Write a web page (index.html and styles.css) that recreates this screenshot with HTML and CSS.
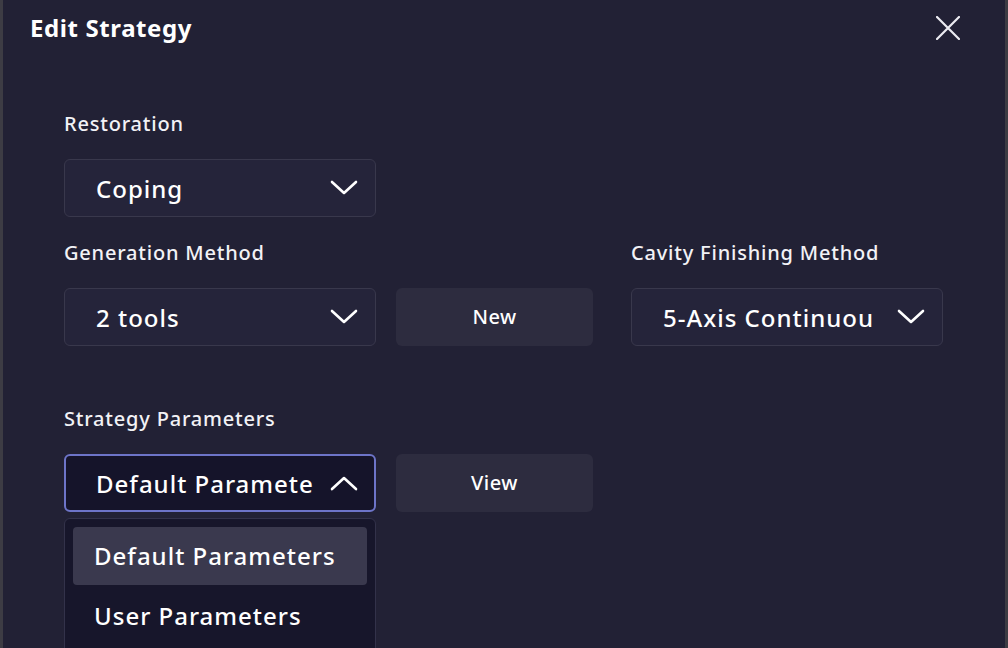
FILE: index.html
```
<!DOCTYPE html>
<html>
    <head>
        <title>Edit Strategy</title>
        <meta charset="utf-8"/>
        <link rel="stylesheet" href="styles.css">
    </head>
    <body>
        <div class="dialog">
            <div class="header">
                <h1 class="title">Edit Strategy</h1>
                <span class="close">
                    <svg width="24" height="24" viewBox="0 0 24 24"><path d="M1 1L23 23M23 1L1 23" stroke="#ececf2" stroke-width="2.2" stroke-linecap="round" fill="none"/></svg>
                </span>
            </div>
            <div class="body">
                <div class="row">
                    <div class="field">
                        <div class="label">Restoration</div>
                        <div class="select">
                            <span class="value">Coping</span>
                            <svg class="arrow" width="28" height="16" viewBox="0 0 28 16"><path d="M2 2L14 13L26 2" stroke="#fff" stroke-width="2.6" fill="none" stroke-linecap="round" stroke-linejoin="round"/></svg>
                        </div>
                    </div>
                </div>
                <div class="row row-2">
                    <div class="field">
                        <div class="label">Generation Method</div>
                        <div class="select">
                            <span class="value">2 tools</span>
                            <svg class="arrow" width="28" height="16" viewBox="0 0 28 16"><path d="M2 2L14 13L26 2" stroke="#fff" stroke-width="2.6" fill="none" stroke-linecap="round" stroke-linejoin="round"/></svg>
                        </div>
                    </div>
                    <div class="btn">New</div>
                    <div class="field field-far">
                        <div class="label">Cavity Finishing Method</div>
                        <div class="select">
                            <span class="value">5-Axis Continuou</span>
                            <svg class="arrow" width="28" height="16" viewBox="0 0 28 16"><path d="M2 2L14 13L26 2" stroke="#fff" stroke-width="2.6" fill="none" stroke-linecap="round" stroke-linejoin="round"/></svg>
                        </div>
                    </div>
                </div>
                <div class="row row-3">
                    <div class="field">
                        <div class="label">Strategy Parameters</div>
                        <div class="select open">
                            <span class="value">Default Paramete</span>
                            <svg class="arrow" width="28" height="16" viewBox="0 0 28 16"><path d="M2 14L14 3L26 14" stroke="#fff" stroke-width="2.6" fill="none" stroke-linecap="round" stroke-linejoin="round"/></svg>
                            <ul class="menu">
                                <li class="active">Default Parameters</li>
                                <li>User Parameters</li>
                            </ul>
                        </div>
                    </div>
                    <div class="btn">View</div>
                </div>
            </div>
        </div>
    </body>
</html>
```
FILE: styles.css
```
*{
    margin: 0;
    padding: 0;
    box-sizing: border-box;
}
ul,li{
    list-style-type: none;
}
body{
    background-color: #222135;
    font-family: "Noto Sans", "Open Sans", sans-serif;
    color: #fff;
    overflow: hidden;
}
.dialog{
    width: 1008px;
    height: 648px;
    background-color: #222135;
    border-left: 3px solid #3d3c44;
    border-right: 3px solid #3d3c44;
    overflow: hidden;
}
.header{
    height: 56px;
    display: flex;
    align-items: center;
    justify-content: space-between;
    padding: 0 45px 0 27px;
}
.title{
    font-size: 24px;
    font-weight: 700;
    line-height: 32px;
    margin-top: -1px;
    letter-spacing: 0.6px;
}
.close{
    display: block;
    width: 24px;
    height: 24px;
}
.close svg{
    display: block;
}
.body{
    padding: 54px 0 0 61px;
}
.row{
    display: flex;
    align-items: flex-end;
}
.row-2{
    margin-top: 22px;
}
.row-3{
    margin-top: 59px;
}
.field{
    width: 312px;
}
.field-far{
    margin-left: 38px;
}
.label{
    height: 28px;
    line-height: 28px;
    font-size: 20px;
    font-weight: 500;
    color: #f2f2f6;
    margin-bottom: 21px;
    letter-spacing: 0.8px;
}
.select{
    position: relative;
    height: 58px;
    display: flex;
    align-items: center;
    padding: 0 17px 0 31px;
    background-color: #25243a;
    border: 1px solid #39384c;
    border-radius: 6px;
}
.select .value{
    flex: 1;
    font-size: 24px;
    font-weight: 500;
    white-space: nowrap;
    overflow: hidden;
    letter-spacing: 1px;
}
.select .arrow{
    flex: none;
    margin-left: 10px;
}
.select.open{
    background-color: #15142a;
    border: 2px solid #6d74c8;
    padding-left: 30px;
    padding-right: 16px;
}
.menu{
    position: absolute;
    left: -2px;
    top: 62px;
    width: 312px;
    padding: 8px;
    background-color: #17162b;
    border: 1px solid #33324a;
    border-radius: 6px;
}
.menu li{
    height: 58px;
    line-height: 58px;
    padding-left: 21px;
    font-size: 24px;
    font-weight: 500;
    letter-spacing: 1px;
    border-radius: 4px;
    margin-bottom: 2px;
}
.menu li.active{
    background-color: #3a394e;
}
.btn{
    width: 197px;
    height: 58px;
    margin-left: 20px;
    line-height: 58px;
    text-align: center;
    font-size: 20px;
    font-weight: 500;
    letter-spacing: 0.5px;
    background-color: #2d2c3f;
    border-radius: 6px;
}
```
